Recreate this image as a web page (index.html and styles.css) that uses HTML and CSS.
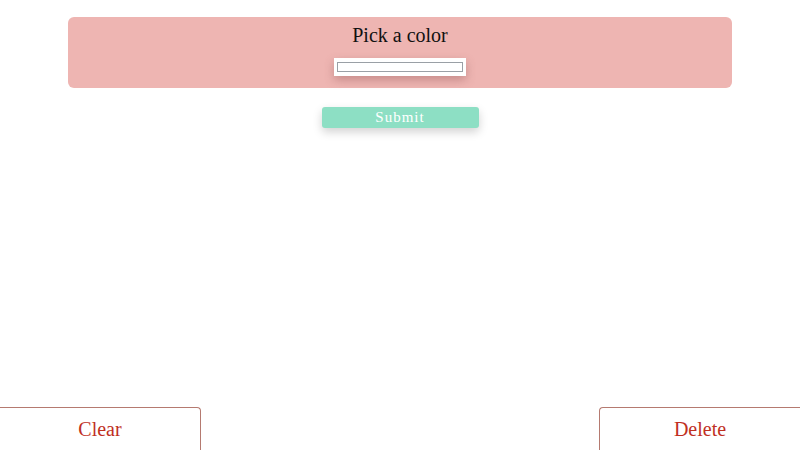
FILE: index.html
```html
<!DOCTYPE html>
<html lang="en">
<head>
  <meta charset="UTF-8" />
  <meta name="viewport" content="width=device-width, initial-scale=1.0"/>
  <title>Color Picker</title>
  <link rel="stylesheet" href="styles.css">
</head>
<body>
  <div class="picker">
    <h2>Pick a color</h2>
    <div class="field">
      <input type="text" id="color" />
    </div>
  </div>

  <button class="submit">Submit</button>

  <div class="actions">
    <button class="action">Clear</button>
    <button class="action">Delete</button>
  </div>
</body>
</html>
```

FILE: styles.css
```css
html, body {
  height: 100%;
}

body {
  margin: 0;
  font-family: "Liberation Serif", serif;
  background-color: #fff;
  display: flex;
  flex-direction: column;
  align-items: center;
  overflow: hidden;
}

.picker {
  width: 83%;
  margin-top: 17px;
  background-color: #eeb5b2;
  border-radius: 6px;
  display: flex;
  flex-direction: column;
  align-items: center;
  padding: 5px 0 12px;
}

.picker h2 {
  margin: 0;
  font-size: 20px;
  font-weight: normal;
  line-height: 26px;
  color: #111;
}

.field {
  margin-top: 10px;
  background-color: #fff;
  padding: 4px 3px;
  box-shadow: 0 4px 10px rgba(150, 90, 90, 0.45);
}

.field input {
  display: block;
  width: 124px;
  height: 8px;
  margin: 0;
  padding: 0;
  border: 1px solid #9aa0a6;
  outline: none;
}

.submit {
  margin-top: 19px;
  width: 157px;
  height: 21px;
  padding: 0;
  border: none;
  border-radius: 3px;
  background-color: #8ddfc4;
  color: #fff;
  font-family: "Liberation Serif", serif;
  font-size: 15px;
  letter-spacing: 1px;
  box-shadow: 0 4px 10px rgba(0, 0, 0, 0.18);
}

.actions {
  margin-top: auto;
  width: 100%;
  display: flex;
  justify-content: space-between;
}

.action {
  width: 201px;
  height: 43px;
  padding: 0;
  background-color: #fff;
  border: 1px solid #b57a70;
  border-bottom: none;
  border-radius: 4px 4px 0 0;
  color: #c0301f;
  font-family: "Liberation Serif", serif;
  font-size: 20px;
}

.action:first-child {
  border-left: none;
  border-top-left-radius: 0;
}

.action:last-child {
  border-right: none;
  border-top-right-radius: 0;
}
```
